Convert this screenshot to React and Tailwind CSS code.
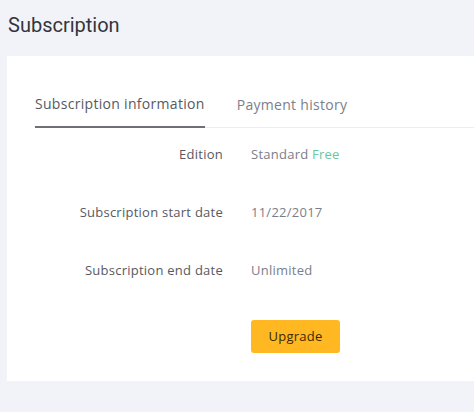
export default function App() {
  const rows = [
    { label: "Edition", value: <>Standard <span className="text-[#6cc5a0]">Free</span></> },
    { label: "Subscription start date", value: "11/22/2017" },
    { label: "Subscription end date", value: "Unlimited" },
  ];

  return (
    <div className="min-h-[412px] w-full bg-[#f2f3f8]">
      <div className="flex h-[56px] items-start pl-[8px] pt-[12px]">
        <h1 className="text-[20px] font-normal leading-[26px] text-[#34353b]" style={{ fontFamily: "Roboto, sans-serif" }}>
          Subscription
        </h1>
      </div>

      <div
        className="ml-[7px] h-[325px] bg-white"
        style={{ fontFamily: "'Open Sans', sans-serif" }}
      >
        <div className="ml-[28px] flex gap-[32px] border-b border-[#ebedf2] pt-[37px]">
          <button className="-mb-px border-b-2 border-[#6f6f75] pb-[11px] text-[14px] leading-[22px] tracking-[0.3px] text-[#575962]">
            Subscription information
          </button>
          <button className="pb-[11px] text-[14px] leading-[22px] tracking-[0.3px] text-[#7b7e8a]">
            Payment history
          </button>
        </div>

        <div className="-mt-[2px] flex flex-col">
          {rows.map((row) => (
            <div key={row.label} className="flex h-[58px] items-center">
              <div className="w-[216px] text-right text-[13px] tracking-[0.25px] text-[#575962]">{row.label}</div>
              <div className="ml-[28px] text-[13px] tracking-[0.25px] text-[#7b7e8a]">{row.value}</div>
            </div>
          ))}
          <div className="mt-[20px] pl-[244px]">
            <button className="h-[33px] w-[89px] rounded-[3px] bg-[#ffb822] text-[13px] tracking-[0.25px] text-[#3a2a05]">
              Upgrade
            </button>
          </div>
        </div>
      </div>
    </div>
  );
}
